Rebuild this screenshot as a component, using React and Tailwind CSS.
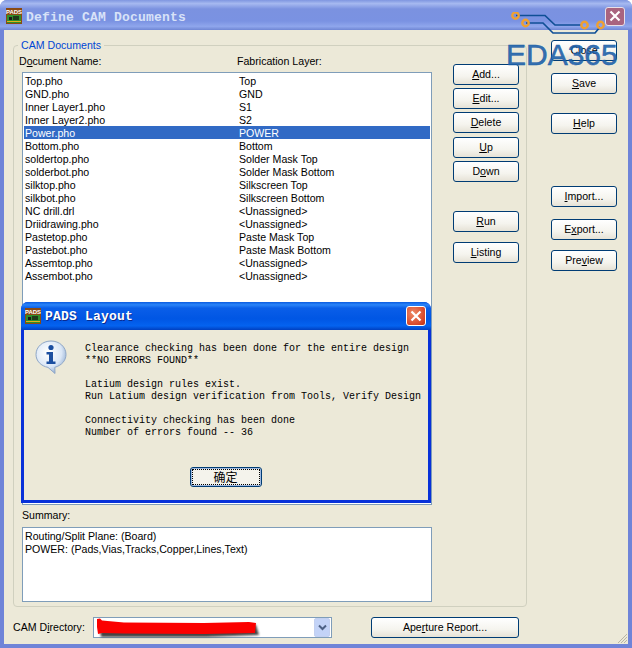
const rows = [
  ['Top.pho', 'Top'],
  ['GND.pho', 'GND'],
  ['Inner Layer1.pho', 'S1'],
  ['Inner Layer2.pho', 'S2'],
  ['Power.pho', 'POWER'],
  ['Bottom.pho', 'Bottom'],
  ['soldertop.pho', 'Solder Mask Top'],
  ['solderbot.pho', 'Solder Mask Bottom'],
  ['silktop.pho', 'Silkscreen Top'],
  ['silkbot.pho', 'Silkscreen Bottom'],
  ['NC drill.drl', '<Unassigned>'],
  ['Driidrawing.pho', '<Unassigned>'],
  ['Pastetop.pho', 'Paste Mask Top'],
  ['Pastebot.pho', 'Paste Mask Bottom'],
  ['Assemtop.pho', '<Unassigned>'],
  ['Assembot.pho', '<Unassigned>'],
];

const dialogLines = [
  'Clearance checking has been done for the entire design',
  '**NO ERRORS FOUND**',
  '',
  'Latium design rules exist.',
  'Run Latium design verification from Tools, Verify Design',
  '',
  'Connectivity checking has been done',
  'Number of errors found -- 36',
];

function PadsIcon() {
  return (
    <svg width="16" height="16" viewBox="0 0 16 16" className="shrink-0">
      <rect width="16" height="16" fill="#8a4a12" />
      <rect x="1" y="7" width="14" height="8" fill="#2f8f2a" />
      <rect x="3" y="9" width="3" height="3" fill="#1a1a1a" />
      <rect x="7" y="8" width="6" height="4" fill="#1f3a1a" />
      <rect x="1" y="13" width="14" height="1" fill="#e0b020" />
      <text x="8" y="6" textAnchor="middle" fontSize="6" fontWeight="700" fill="#fff" fontFamily="Liberation Sans, sans-serif">PADS</text>
    </svg>
  );
}

function InfoIcon() {
  return (
    <svg width="32" height="34" viewBox="0 0 32 34" className="shrink-0">
      <defs>
        <radialGradient id="bubble" cx="0.4" cy="0.35" r="0.75">
          <stop offset="0" stopColor="#ffffff" />
          <stop offset="0.6" stopColor="#dbe7f6" />
          <stop offset="1" stopColor="#7d9cc8" />
        </radialGradient>
      </defs>
      <path d="M16 1C7.5 1 1 7 1 14.5 1 21 6 26 13 27.4L20 33.5 19.8 27.3C26.5 25.6 31 20.6 31 14.5 31 7 24.5 1 16 1Z" fill="url(#bubble)" stroke="#8ea6c6" strokeWidth="1" />
      <circle cx="16" cy="7.5" r="2.6" fill="#1c4fa0" />
      <path d="M11.5 12H18V21.5H20.5V24H11.5V21.5H14V14.5H11.5Z" fill="#1c4fa0" />
    </svg>
  );
}

function CloseGlyph() {
  return (
    <svg width="12" height="12" viewBox="0 0 12 12">
      <path d="M1.5 1.5L10.5 10.5M10.5 1.5L1.5 10.5" stroke="#fff" strokeWidth="2.2" />
    </svg>
  );
}

function Btn({ className = '', children }) {
  return (
    <div className={`flex items-center justify-center rounded-[3px] border border-[#003c74] bg-[linear-gradient(180deg,#ffffff_0%,#f5f4ee_60%,#e6e2d6_100%)] text-[#000] ${className}`}>
      <span>{children}</span>
    </div>
  );
}

function Dialog() {
  return (
    <div className="absolute left-[21px] top-[302px] flex h-[201px] w-[410px] flex-col overflow-hidden rounded-t-[7px] bg-[#0831d9]">
      <div className="flex h-[28px] shrink-0 items-center bg-[linear-gradient(180deg,#0a5be0_0%,#2a84f8_10%,#0a5ee8_22%,#0056e4_60%,#0463f0_85%,#0040c0_100%)] pl-[4px] pr-[5px]">
        <PadsIcon />
        <span className="ml-[4px] font-['Liberation_Mono',monospace] text-[13px] font-bold tracking-[0.2px] text-white [text-shadow:1px_1px_0_#0a2a90]">PADS Layout</span>
        <div className="ml-auto flex h-[20px] w-[20px] items-center justify-center rounded-[3px] border border-white bg-[radial-gradient(circle_at_35%_35%,#ee8a66,#d8482a_70%,#b93212)]">
          <CloseGlyph />
        </div>
      </div>
      <div className="mx-[3px] mb-[3px] flex min-h-0 flex-1 flex-col bg-[#ece9d8]">
        <div className="flex pl-[11px] pt-[10px]">
          <InfoIcon />
          <div className="ml-[18px] pt-[3px] font-['Liberation_Mono',monospace] text-[10px] leading-[12px] text-black">
            {dialogLines.map((line, i) => (
              <div key={i} className="h-[12px] whitespace-pre">{line}</div>
            ))}
          </div>
        </div>
        <div className="mt-[28px] flex justify-center pr-[1px]">
          <div className="h-[20px] w-[72px] rounded-[3px] border border-[#003c74] bg-[#f4f3ec] p-[1px] shadow-[inset_0_0_0_1px_#9fb9e0]">
            <div className="flex h-full items-center justify-center border border-dotted border-black font-['Noto_Sans_CJK_SC',sans-serif] text-[12px] leading-none text-black">确定</div>
          </div>
        </div>
      </div>
    </div>
  );
}

function Watermark() {
  return (
    <div className="absolute left-[506px] top-[12px] h-[56px] w-[116px]">
      <svg width="116" height="34" viewBox="0 0 116 34" className="block">
        <path d="M10 3.5H39L49 13H76" fill="none" stroke="#0f4f96" strokeWidth="1.7" />
        <path d="M20 11H37L47 21H89L94 15" fill="none" stroke="#0f4f96" strokeWidth="1.7" />
        <circle cx="9.5" cy="3.5" r="3.2" fill="none" stroke="#f0a030" strokeWidth="2.4" />
        <circle cx="19.5" cy="11" r="3.2" fill="none" stroke="#f0a030" strokeWidth="2.4" />
        <circle cx="78.5" cy="13" r="3.2" fill="none" stroke="#f0a030" strokeWidth="2.4" />
        <circle cx="94.5" cy="13" r="3.2" fill="none" stroke="#f0a030" strokeWidth="2.4" />
      </svg>
      <div className="mt-[-6px] font-['Liberation_Sans',sans-serif] text-[30px] leading-[30px] text-[#1a5ea8]/90 [-webkit-text-stroke:0.5px_#1a5ea8]">EDA365</div>
    </div>
  );
}

export default function App() {
  return (
    <div className="relative flex h-[648px] w-[632px] flex-col overflow-hidden rounded-t-[7px] bg-[#6f84d8] font-['Liberation_Sans',sans-serif] text-[10.6px] leading-[13px] text-black">
      <div className="flex h-[30px] shrink-0 items-center bg-[linear-gradient(180deg,#7f96e0_0%,#a6b9f0_12%,#7b92e0_30%,#7a92e2_70%,#8fa6ec_88%,#6f86d4_100%)] pl-[6px] pr-[7px] pt-[2px]">
        <PadsIcon />
        <span className="ml-[4px] mt-[2px] font-['Liberation_Mono',monospace] text-[13px] font-bold tracking-[0.2px] text-[#d8e2f8]">Define CAM Documents</span>
        <div className="ml-auto flex h-[19px] w-[20px] items-center justify-center rounded-[3px] border border-[#e8e0e8] bg-[#a9647f]">
          <CloseGlyph />
        </div>
      </div>

      <div className="mx-[4px] mb-[4px] flex min-h-0 flex-1 flex-col bg-[#ece9d8] pl-[9px]">
        <div className="flex">
          <div className="mt-[15px] flex h-[562px] w-[514px] shrink-0 flex-col rounded-[4px] border border-[#d0d0bf] px-[8px]">
            <div className="-mt-[7px] -ml-[4px] h-[13px] w-fit bg-[#ece9d8] px-[3px] text-[#0046d5]">CAM Documents</div>
            <div className="flex">
              <div className="w-[410px] shrink-0">
                <div className="mt-[3px] flex h-[13px]">
                  <span className="-ml-[3px] w-[218px]">D<span className="underline">o</span>cument Name:</span>
                  <span>Fabrication Layer:</span>
                </div>
                <div className="mt-[4px] h-[433px] border border-[#7f9db9] bg-white p-px">
                  {rows.map(([doc, layer]) => (
                    <div key={doc} className={`flex h-[13px] pl-[1px] pt-[1px] ${doc === 'Power.pho' ? 'bg-[#316ac5] text-white' : ''}`}>
                      <span className="w-[214px] shrink-0">{doc}</span>
                      <span>{layer}</span>
                    </div>
                  ))}
                </div>
                <div className="mt-[4px]">Summary:</div>
                <div className="mt-[5px] h-[75px] border border-[#7f9db9] bg-white px-[2px] pt-[2px]">
                  <div>Routing/Split Plane: (Board)</div>
                  <div>POWER: (Pads,Vias,Tracks,Copper,Lines,Text)</div>
                </div>
              </div>
              <div className="ml-[21px] flex w-[66px] shrink-0 flex-col pt-[12px]">
                <Btn className="h-[21px]"><span className="underline">A</span>dd...</Btn>
                <Btn className="mt-[3px] h-[21px]"><span className="underline">E</span>dit...</Btn>
                <Btn className="mt-[3px] h-[21px]"><span className="underline">D</span>elete</Btn>
                <Btn className="mt-[4px] h-[21px]"><span className="underline">U</span>p</Btn>
                <Btn className="mt-[3px] h-[21px]">D<span className="underline">o</span>wn</Btn>
                <Btn className="mt-[29px] h-[21px]"><span className="underline">R</span>un</Btn>
                <Btn className="mt-[10px] h-[21px]"><span className="underline">L</span>isting</Btn>
              </div>
            </div>
          </div>

          <div className="ml-[24px] flex w-[66px] shrink-0 flex-col pt-[10px]">
            <Btn className="h-[21px]">Close</Btn>
            <Btn className="mt-[12px] h-[21px]"><span className="underline">S</span>ave</Btn>
            <Btn className="mt-[19px] h-[21px]"><span className="underline">H</span>elp</Btn>
            <Btn className="mt-[52px] h-[21px]"><span className="underline">I</span>mport...</Btn>
            <Btn className="mt-[12px] h-[21px]">E<span className="underline">x</span>port...</Btn>
            <Btn className="mt-[10px] h-[21px]">Pre<span className="underline">v</span>iew</Btn>
          </div>
        </div>

        <div className="mt-[10px] flex items-center">
          <span className="w-[80px] shrink-0">CAM D<span className="underline">i</span>rectory:</span>
          <div className="relative flex h-[21px] w-[239px] shrink-0 items-center justify-end border border-[#7f9db9] bg-white pr-px">
            <svg width="170" height="22" viewBox="0 0 170 22" className="absolute left-[0px] top-[-1px]">
              <defs>
                <filter id="blur" x="-5%" y="-30%" width="110%" height="170%">
                  <feGaussianBlur stdDeviation="1" />
                </filter>
              </defs>
              <path d="M3 3L30 7L110 7L160 6L163 16L110 18L30 18L5 18Z" fill="#444" filter="url(#blur)" transform="translate(2 2)" />
              <path d="M3 2L6 1.5L8 3.5L30 5.5L110 6L155 5L162 6L161 16L110 17L30 16.5L8 16L4 17L3 10Z" fill="#fb0000" />
            </svg>
            <div className="flex h-[19px] w-[16px] items-center justify-center rounded-[2px] border border-[#c3d0f0] bg-[#c3d3f7]">
              <svg width="9" height="7" viewBox="0 0 9 7">
                <path d="M1 1.5L4.5 5L8 1.5" fill="none" stroke="#4d6185" strokeWidth="2" />
              </svg>
            </div>
          </div>
          <Btn className="ml-[39px] h-[21px] w-[148px]">Ape<span className="underline">r</span>ture Report...</Btn>
        </div>

        <svg width="12" height="12" viewBox="0 0 12 12" className="absolute bottom-[4px] right-[4px]">
          <path d="M11 2L2 11M11 5L5 11M11 8L8 11" stroke="#b8b4a4" strokeWidth="1" />
        </svg>
      </div>

      <Dialog />
      <Watermark />
    </div>
  );
}
